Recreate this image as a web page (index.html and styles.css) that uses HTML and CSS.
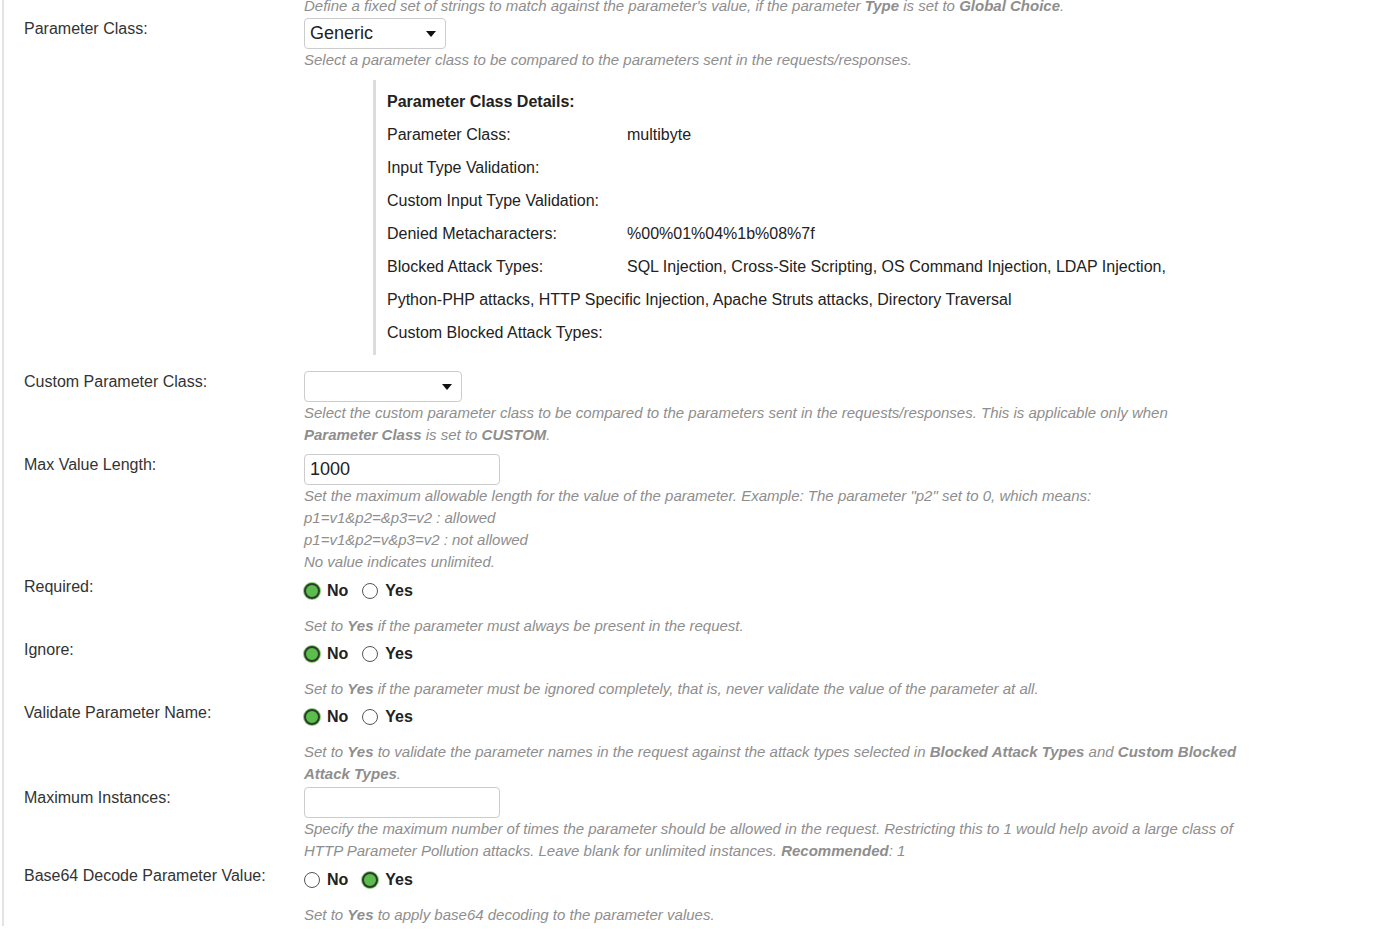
FILE: index.html
```html
<!DOCTYPE html>
<html lang="en">

<head>
    <meta charset="UTF-8">
    <meta name="viewport" content="width=device-width, initial-scale=1.0">
    <title>Parameter Settings</title>
    <link rel="stylesheet" href="styles.css">
</head>

<body>
    <div class="page">
        <div class="row row-top">
            <div class="field-label"></div>
            <div class="field">
                <div class="help">Define a fixed set of strings to match against the parameter's value, if the parameter <b>Type</b> is set to <b>Global Choice</b>.</div>
            </div>
        </div>

        <div class="row">
            <div class="field-label">Parameter Class:</div>
            <div class="field">
                <div class="select select-generic"><span>Generic</span><span class="caret"></span></div>
                <div class="help">Select a parameter class to be compared to the parameters sent in the requests/responses.</div>
                <div class="details">
                    <div class="details-title">Parameter Class Details:</div>
                    <div class="details-item"><span class="details-key">Parameter Class:</span>multibyte</div>
                    <div class="details-item"><span class="details-key">Input Type Validation:</span></div>
                    <div class="details-item"><span class="details-key">Custom Input Type Validation:</span></div>
                    <div class="details-item"><span class="details-key">Denied Metacharacters:</span>%00%01%04%1b%08%7f</div>
                    <div class="details-item"><span class="details-key">Blocked Attack Types:</span>SQL Injection, Cross-Site Scripting, OS Command Injection, LDAP Injection, <span class="nowrap">Python-PHP</span> attacks, HTTP Specific Injection, Apache Struts attacks, Directory Traversal</div>
                    <div class="details-item"><span class="details-key">Custom Blocked Attack Types:</span></div>
                </div>
            </div>
        </div>

        <div class="row row-loose">
            <div class="field-label">Custom Parameter Class:</div>
            <div class="field">
                <div class="select select-custom"><span></span><span class="caret"></span></div>
                <div class="help">Select the custom parameter class to be compared to the parameters sent in the requests/responses. This is applicable only when <b>Parameter Class</b> is set to <b>CUSTOM</b>.</div>
            </div>
        </div>

        <div class="row row-plus">
            <div class="field-label">Max Value Length:</div>
            <div class="field">
                <input class="text-input" type="text" value="1000">
                <div class="help">Set the maximum allowable length for the value of the parameter. Example: The parameter "p2" set to 0, which means:<br>
                    p1=v1&amp;p2=&amp;p3=v2 : allowed<br>
                    p1=v1&amp;p2=v&amp;p3=v2 : not allowed<br>
                    No value indicates unlimited.</div>
            </div>
        </div>

        <div class="row">
            <div class="field-label">Required:</div>
            <div class="field">
                <div class="radio-group">
                    <label class="radio"><input type="radio" name="required" checked>No</label>
                    <label class="radio"><input type="radio" name="required">Yes</label>
                </div>
                <div class="help">Set to <b>Yes</b> if the parameter must always be present in the request.</div>
            </div>
        </div>

        <div class="row">
            <div class="field-label">Ignore:</div>
            <div class="field">
                <div class="radio-group">
                    <label class="radio"><input type="radio" name="ignore" checked>No</label>
                    <label class="radio"><input type="radio" name="ignore">Yes</label>
                </div>
                <div class="help">Set to <b>Yes</b> if the parameter must be ignored completely, that is, never validate the value of the parameter at all.</div>
            </div>
        </div>

        <div class="row">
            <div class="field-label">Validate Parameter Name:</div>
            <div class="field">
                <div class="radio-group">
                    <label class="radio"><input type="radio" name="validate" checked>No</label>
                    <label class="radio"><input type="radio" name="validate">Yes</label>
                </div>
                <div class="help">Set to <b>Yes</b> to validate the parameter names in the request against the attack types selected in <b>Blocked Attack Types</b> and <b>Custom Blocked Attack Types</b>.</div>
            </div>
        </div>

        <div class="row row-plus">
            <div class="field-label">Maximum Instances:</div>
            <div class="field">
                <input class="text-input" type="text" value="">
                <div class="help">Specify the maximum number of times the parameter should be allowed in the request. Restricting this to 1 would help avoid a large class of HTTP Parameter Pollution attacks. Leave blank for unlimited instances. <b>Recommended</b>: 1</div>
            </div>
        </div>

        <div class="row">
            <div class="field-label">Base64 Decode Parameter Value:</div>
            <div class="field">
                <div class="radio-group">
                    <label class="radio"><input type="radio" name="base64">No</label>
                    <label class="radio"><input type="radio" name="base64" checked>Yes</label>
                </div>
                <div class="help">Set to <b>Yes</b> to apply base64 decoding to the parameter values.</div>
            </div>
        </div>
    </div>
</body>

</html>
```

FILE: styles.css
```css
/* Global settings */
*, *::before, *::after {
    box-sizing: border-box;
}

html,
body {
    margin: 0;
    padding: 0;
    height: 100%;
    background-color: #FFFFFF;
    font-family: "Liberation Sans", Arial, Helvetica, sans-serif;
    color: #333;
    overflow: hidden;
}

.page {
    margin-left: 2px;
    min-height: 100%;
    padding-left: 20px;
    border-left: 2px solid #e4e4e4;
}

.row {
    display: grid;
    grid-template-columns: 280px 935px;
    margin-bottom: 2px;
}

.row-top {
    margin-top: -5px;
    margin-bottom: 1px;
}

.row-loose {
    margin-bottom: 8px;
}

.row-plus {
    margin-bottom: 3px;
}

.field-label {
    padding-top: 1px;
    font-size: 16px;
    line-height: 20px;
    color: #333;
}

.help {
    font-size: 15px;
    line-height: 22px;
    font-style: italic;
    color: #8e8e8e;
}

.help b {
    font-weight: bold;
}

.nowrap {
    white-space: nowrap;
}

/* Dropdowns */
.select {
    display: flex;
    align-items: center;
    justify-content: space-between;
    height: 31px;
    padding: 0 9px 0 5px;
    border: 1px solid #ccc;
    border-radius: 4px;
    font-size: 18px;
    color: #222;
}

.select-generic {
    width: 142px;
}

.select-custom {
    width: 158px;
}

.caret {
    width: 0;
    height: 0;
    border-left: 5px solid transparent;
    border-right: 5px solid transparent;
    border-top: 6px solid #111;
}

.text-input {
    display: block;
    width: 196px;
    height: 31px;
    margin: 0;
    padding: 0 5px;
    border: 1px solid #ccc;
    border-radius: 4px;
    font-family: inherit;
    font-size: 18px;
    color: #222;
    outline: none;
}

/* Class details box */
.details {
    margin: 9px 0 14px 69px;
    padding: 5px 0 6px 11px;
    border-left: 3px solid #dcdcdc;
    font-size: 16px;
    line-height: 33px;
    color: #222;
}

.details-title {
    font-weight: bold;
}

.details-key {
    display: inline-block;
    width: 240px;
}

/* Radio buttons */
.radio-group {
    display: flex;
    align-items: center;
    height: 29px;
    padding-top: 1px;
    margin-bottom: 10px;
}

.radio {
    display: flex;
    align-items: center;
    margin-right: 14px;
    font-size: 16px;
    font-weight: bold;
    color: #222;
}

.radio input {
    appearance: none;
    -webkit-appearance: none;
    width: 16px;
    height: 16px;
    margin: 0 7px 0 0;
    border: 1px solid #555;
    border-radius: 50%;
    background-color: #FFF;
}

.radio input:checked {
    border: 2px solid #2e3b2c;
    background-color: #5bbd4b;
    box-shadow: 0 0 0 1px #86d176;
}
```
